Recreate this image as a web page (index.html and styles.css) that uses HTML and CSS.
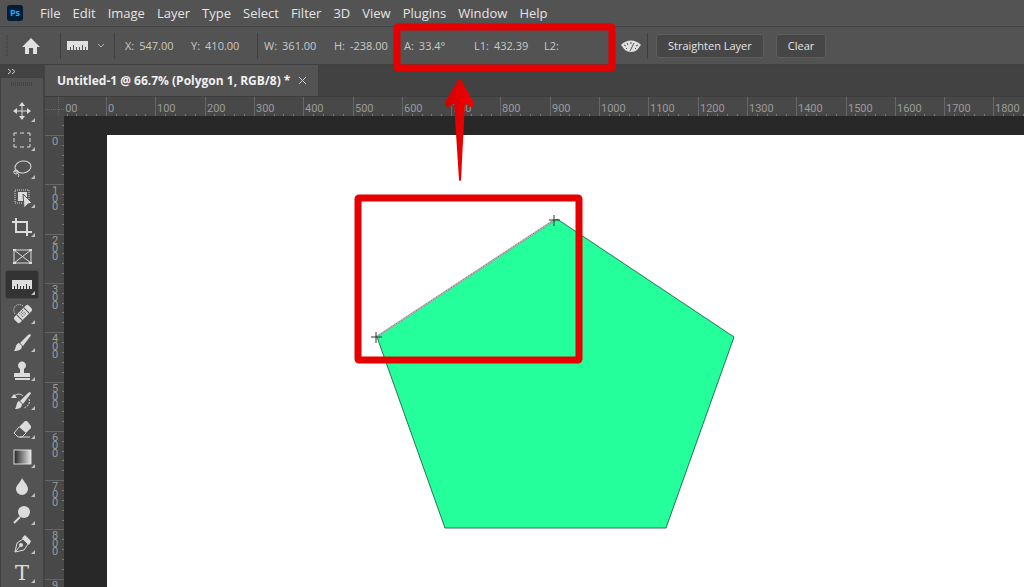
FILE: index.html
```html
<!DOCTYPE html>
<html lang="en">
<head>
    <meta charset="UTF-8">
    <meta name="viewport" content="width=device-width, initial-scale=1.0">
    <title>Untitled-1 @ 66.7%</title>
    <link rel="stylesheet" href="styles.css">
</head>
<body>
    <div class="app">
        <header class="menu-bar">
            <div class="logo">Ps</div>
            <nav class="menus">
                <button>File</button>
                <button>Edit</button>
                <button>Image</button>
                <button>Layer</button>
                <button>Type</button>
                <button>Select</button>
                <button>Filter</button>
                <button>3D</button>
                <button>View</button>
                <button>Plugins</button>
                <button>Window</button>
                <button>Help</button>
            </nav>
        </header>

        <div class="options-bar">
            <div class="grip"></div>
            <button class="home" aria-label="Home">
                <svg width="20" height="18" viewBox="0 0 20 18"><path d="M10 1L1 10h3v7h4v-6h4v6h4v-7h3z" fill="#e0e0e0"/></svg>
            </button>
            <div class="divider"></div>
            <button class="preset" aria-label="Ruler tool presets">
                <svg width="21" height="10" viewBox="0 0 21 10"><path d="M0 0h21v9h-2V6h-1v3h-2V4h-1v5h-2V6h-1v3h-2V6H9v3H7V4H6v5H4V6H3v3H0z" fill="#e0e0e0"/></svg>
                <svg width="8" height="5" viewBox="0 0 8 5"><path d="M1 1l3 3 3-3" fill="none" stroke="#b0b0b0"/></svg>
            </button>
            <div class="divider"></div>
            <div class="readouts readouts-position">
                <div class="readout"><span>X:</span><span>547.00</span></div>
                <div class="readout"><span>Y:</span><span>410.00</span></div>
            </div>
            <div class="divider"></div>
            <div class="readouts">
                <div class="readout"><span>W:</span><span>361.00</span></div>
                <div class="readout"><span>H:</span><span>-238.00</span></div>
                <div class="readout"><span>A:</span><span>33.4°</span></div>
                <div class="readout"><span>L1:</span><span>432.39</span></div>
                <div class="readout"><span>L2:</span></div>
            </div>
            <button class="scale" aria-label="Use measurement scale">
                <svg width="20" height="12" viewBox="0 0 20 12">
                    <path d="M0 5C5-1 15-1 20 5l-4 5q-2 2-6 2t-6-2z" fill="#e0e0e0"/>
                    <path d="M3 5l2 1M6 3l1 2M10 2v2M17 5l-2 1M5 8l1 1M15 8l-1 1M13 3L9 11" fill="none" stroke="#535353"/>
                </svg>
            </button>
            <div class="divider"></div>
            <button class="btn">Straighten Layer</button>
            <button class="btn">Clear</button>
        </div>

        <div class="workspace">
            <aside class="tools">
                <button class="tools-head" aria-label="Expand panel">
                    <svg width="9" height="7" viewBox="0 0 9 7"><path d="M1 1l3 2.500-3 2.500M5 1l3 2.500-3 2.500" fill="none" stroke="#d0d0d0"/></svg>
                </button>
                <div class="tools-grip"></div>
                <div class="tool-list">
                    <button class="tool" aria-label="Move">
                        <svg viewBox="0 0 24 24"><path d="M12 5v14M5 12h14"/><path class="fill" d="M12 3l3 4H9zM12 21l3-4H9zM3 12l4-3v6zM21 12l-4-3v6z"/></svg>
                    </button>
                    <button class="tool" aria-label="Marquee">
                        <svg viewBox="0 0 24 24"><path d="M4 8V5h3M10 5h4M17 5h3v3M20 10v4M20 16v3h-3M14 19h-4M7 19H4v-3M4 14v-4"/></svg>
                    </button>
                    <button class="tool" aria-label="Lasso">
                        <svg viewBox="0 0 24 24"><ellipse cx="13" cy="10" rx="8" ry="6" transform="rotate(-8 13 10)"/><path d="M6 13c-3 0-3 4 0 4 3 0 3-4 0-4M4 14c4 2 6 4 4 6"/></svg>
                    </button>
                    <button class="tool" aria-label="Object Selection">
                        <svg viewBox="0 0 24 24"><path stroke-dasharray="1 1" d="M5 4h14v13H5z"/><path class="fill" d="M8 6h9v9H8z"/><path class="fill cursor" d="M13 8l9 9-4 1-4 4z"/></svg>
                    </button>
                    <button class="tool" aria-label="Crop">
                        <svg viewBox="0 0 24 24"><path class="thick" d="M6 3v14h16M2 7h15v14"/></svg>
                    </button>
                    <button class="tool no-flyout" aria-label="Frame">
                        <svg viewBox="0 0 24 24"><path d="M4 6h17v13H4zM4 6l17 13M21 6L4 19"/><path class="fill" d="M3 5h3v2H3zM19 5h3v2h-3zM3 18h3v2H3zM19 18h3v2h-3z"/></svg>
                    </button>
                    <button class="tool active" aria-label="Ruler">
                        <svg viewBox="0 0 24 24"><path class="fill" d="M2 8h20v9h-2v-3h-1v3h-2v-5h-1v5h-2v-3h-1v3h-2v-3h-1v3H8v-5H7v5H5v-3H4v3H2z"/></svg>
                    </button>
                    <button class="tool" aria-label="Healing Brush">
                        <svg viewBox="0 0 24 24"><path stroke-dasharray="1 1" d="M13 5C8 1 1 6 5 13"/><g transform="rotate(-45 13 13)"><rect class="fill" x="3" y="9" width="20" height="8" rx="2"/><path stroke="#535353" d="M8 9v8M18 9v8"/><path stroke="#535353" stroke-dasharray="1 1" d="M11 10v6M13 10v6M15 10v6"/></g></svg>
                    </button>
                    <button class="tool" aria-label="Brush">
                        <svg viewBox="0 0 24 24"><path class="fill" d="M20 4c2 1 0 3-1 4l-6 8-3-3 8-8zM9 13l3 3c0 4-4 5-8 5 2-2 1-7 5-8z"/></svg>
                    </button>
                    <button class="tool" aria-label="Clone Stamp">
                        <svg viewBox="0 0 24 24"><path class="fill" d="M10 10a4 4 0 1 1 4 0v4h5q1 0 1 1v3H4v-3q0-1 1-1h5zM5 19h15v2H5z"/></svg>
                    </button>
                    <button class="tool" aria-label="History Brush">
                        <svg viewBox="0 0 24 24"><path class="fill" d="M20 4c2 1 0 3-1 4l-6 8-3-3 8-8zM9 13l3 3c0 4-3 5-7 5 2-2 1-7 4-8zM1 10l3-4 3 4z"/><path d="M4 8c4-3 7-2 9 0"/><path stroke-dasharray="2 1" d="M19 11q2 6-5 9"/></svg>
                    </button>
                    <button class="tool" aria-label="Eraser">
                        <svg viewBox="0 0 24 24"><path d="M9 10l-5 6 4 4h4l4-4M10 20h10"/><path class="fill" d="M9 10l6-6h2l4 5v2l-5 5z"/></svg>
                    </button>
                    <button class="tool" aria-label="Gradient">
                        <svg viewBox="0 0 24 24">
                            <defs><linearGradient id="ramp"><stop stop-color="#222"/><stop offset="1" stop-color="#e8e8e8"/></linearGradient></defs>
                            <rect x="4" y="5" width="17" height="14" fill="url(#ramp)"/>
                        </svg>
                    </button>
                    <button class="tool" aria-label="Blur">
                        <svg viewBox="0 0 24 24"><path class="fill" d="M12 4c2 4 6 7 6 11a6 6 0 0 1-12 0c0-4 5-7 6-11z"/></svg>
                    </button>
                    <button class="tool" aria-label="Dodge">
                        <svg viewBox="0 0 24 24"><circle class="fill" cx="14" cy="9" r="6"/><path class="thick" d="M10 14l-6 6"/></svg>
                    </button>
                    <button class="tool" aria-label="Pen">
                        <svg viewBox="0 0 24 24"><path d="M5 20l2-9 6-4 5 5-4 6zM5 20l6-7"/><circle class="fill" cx="11" cy="13" r="2"/><path class="fill" d="M12 6l3-3 6 6-2 4z"/></svg>
                    </button>
                    <button class="tool type-tool" aria-label="Type">T</button>
                </div>
            </aside>

            <main class="document">
                <div class="tabs">
                    <div class="tab">
                        <span>Untitled-1 @ 66.7% (Polygon 1, RGB/8) *</span>
                        <button class="tab-close" aria-label="Close">
                            <svg width="7" height="7" viewBox="0 0 7 7"><path d="M0 0l7 7M7 0L0 7" stroke="#c8c8c8"/></svg>
                        </button>
                    </div>
                </div>
                <div class="ruler-corner"></div>
                <svg class="ruler" id="rulerX"></svg>
                <svg class="ruler ruler-y" id="rulerY"></svg>
                <div class="stage">
                    <svg class="artboard">
                        <path d="M450 84L627 202L559 393H338L270 202z" fill="#24ff9c" stroke="#2b7456"/>
                        <path d="M269 202L447 85" stroke="#c9c9c9" stroke-width="2"/>
                        <path d="M269 202L447 85" stroke="#666" stroke-dasharray="1 1"/>
                        <path d="M264 202h11M269 197v11M442 85h11M447 80v11" stroke="#333"/>
                    </svg>
                </div>
            </main>
        </div>

        <!-- Highlights drawn over the window -->
        <svg class="annotations">
            <defs>
                <linearGradient id="arrow"><stop stop-color="#d40000"/><stop offset="1" stop-color="#f60000"/></linearGradient>
            </defs>
            <rect x="397" y="27" width="215" height="41" rx="1"/>
            <rect x="358" y="198" width="221" height="162" rx="1"/>
            <path d="M459 79Q460 78 461 80L474 103Q474 107 471 107Q468 107 465 102L461 180Q460 182 459 180L454 102Q451 107 448 107Q444 106 445 102Z" fill="url(#arrow)"/>
        </svg>
    </div>
    <script src="rulers.js"></script>
</body>
</html>
```
FILE: styles.css
```css
* {
    margin: 0;
    padding: 0;
    box-sizing: border-box;
}

body {
    font-family: "Open Sans", "Noto Sans", sans-serif;
    background: #535353;
    color: #e4e4e4;
}

button {
    background: none;
    border: none;
    color: inherit;
    font: inherit;
    cursor: pointer;
}

.app {
    position: relative;
    display: flex;
    flex-direction: column;
    height: 100vh;
    overflow: hidden;
}

/* Menu bar */
.menu-bar {
    display: flex;
    align-items: center;
    flex: none;
    height: 27px;
    padding-left: 7px;
    border-bottom: 1px solid #404040;
}

.logo {
    width: 16px;
    height: 16px;
    background: #001e36;
    border-radius: 3px;
    color: #31a8ff;
    font-size: 9px;
    font-weight: bold;
    line-height: 15px;
    text-align: center;
}

.menus {
    display: flex;
    gap: 12px;
    margin-left: 17px;
    font-size: 13px;
    line-height: 24px;
}

/* Options bar */
.options-bar {
    display: flex;
    align-items: center;
    flex: none;
    height: 38px;
    padding-left: 6px;
    border-bottom: 1px solid #404040;
    color: #c8c8c8;
    font-size: 11px;
}

.grip {
    width: 2px;
    height: 22px;
    background: repeating-linear-gradient(#444 0 1px, transparent 1px 2px);
}

.divider {
    width: 1px;
    height: 26px;
    background: #3e3e3e;
}

.home {
    width: 52px;
    line-height: 0;
}

.home svg {
    margin-left: -6px;
}

.preset {
    display: flex;
    align-items: center;
    gap: 9px;
    width: 53px;
    padding-left: 6px;
}

.readouts {
    display: flex;
    padding-left: 6px;
}

.readouts-position {
    padding-left: 10px;
}

.readout {
    display: flex;
    gap: 5px;
    width: 70px;
}

.readouts-position .readout {
    width: 66px;
}

.scale {
    width: 33px;
    line-height: 0;
}

.btn {
    height: 24px;
    padding: 0 11px;
    margin-left: 8px;
    background: #464646;
    border: 1px solid #5e5e5e;
    border-radius: 3px;
    color: #e4e4e4;
}

.btn + .btn {
    margin-left: 12px;
}

/* Tool panel */
.workspace {
    display: flex;
    flex: 1;
    min-height: 0;
}

.tools {
    display: flex;
    flex-direction: column;
    flex: none;
    width: 45px;
    border-left: 1px solid #424242;
    border-right: 2px solid #424242;
}

.tools-head {
    flex: none;
    height: 13px;
    padding-left: 6px;
    background: #424242;
    line-height: 0;
    text-align: left;
}

.tools-grip {
    flex: none;
    width: 22px;
    height: 4px;
    margin: 4px 10px 11px;
    background: repeating-linear-gradient(90deg, #444 0 1px, transparent 1px 2px);
}

.tool-list {
    display: flex;
    flex-direction: column;
    flex: 1;
    min-height: 0;
}

.tool {
    position: relative;
    flex: 1;
    width: 34px;
    min-height: 0;
    margin: 0 4px;
    border: 1px solid transparent;
    line-height: 0;
}

.tool svg {
    width: 24px;
    height: 24px;
    margin: 0 auto;
    fill: none;
    stroke: #dcdcdc;
}

.tool svg .fill {
    fill: #dcdcdc;
    stroke-width: 0;
}

.tool svg .cursor {
    stroke: #535353;
    stroke-width: 1;
}

.tool svg .thick {
    stroke-width: 2;
}

.tool::after {
    content: "";
    position: absolute;
    right: 3px;
    bottom: 3px;
    border-left: 4px solid transparent;
    border-bottom: 4px solid #c0c0c0;
}

.no-flyout::after {
    display: none;
}

.active {
    background: #333;
    border-color: #464646;
    border-radius: 3px;
}

.type-tool {
    color: #dcdcdc;
    font-family: "DejaVu Serif", serif;
    font-size: 21px;
}

/* Document window */
.document {
    display: grid;
    grid-template: 32px 19px 1fr / 19px 1fr;
    flex: 1;
    min-width: 0;
}

.tabs {
    display: flex;
    grid-column: 1 / -1;
    background: #424242;
    border-bottom: 1px solid #3c3c3c;
}

.tab {
    display: flex;
    align-items: center;
    gap: 9px;
    padding: 0 12px;
    background: #535353;
    color: #f0f0f0;
    font-size: 12px;
    font-weight: bold;
}

.tab-close {
    line-height: 0;
}

.ruler-corner {
    background:
        repeating-linear-gradient(90deg, #666 0 1px, transparent 1px 2px) 0 12px / 100% 1px no-repeat,
        repeating-linear-gradient(#666 0 1px, transparent 1px 2px) 13px 0 / 1px 100% no-repeat,
        #4a4a4a;
}

.ruler {
    width: 100%;
    height: 100%;
    min-height: 0;
    background: #484848;
    fill: #9a9a9a;
    font-family: "Liberation Sans Narrow", Roboto, sans-serif;
    font-size: 11px;
}

.ruler-y {
    font-family: Roboto, sans-serif;
    text-anchor: middle;
}

.stage {
    display: flex;
    min-height: 0;
    padding: 19px 0 0 43px;
    background: #282828;
}

.artboard {
    flex: 1;
    width: 100%;
    height: 100%;
    background: #fff;
    fill: none;
}

.annotations {
    position: absolute;
    inset: 0;
    width: 100%;
    height: 100%;
    fill: none;
    pointer-events: none;
}

.annotations rect {
    stroke: #e60000;
    stroke-width: 7px;
}
```
FILE: rulers.js
```js
const NS = 'http://www.w3.org/2000/svg';
const STEP = 49.3; // screen pixels per 100 document pixels

function add(parent, name, attrs, text) {
    const el = document.createElementNS(NS, name);
    for (const key in attrs) {
        el.setAttribute(key, attrs[key]);
    }
    if (text !== undefined) {
        el.textContent = text;
    }
    parent.appendChild(el);
    return el;
}

function drawRuler(svg, origin, vertical) {
    const length = vertical ? svg.clientHeight : svg.clientWidth;
    const line = (pos, size, color) => {
        const attrs = vertical
            ? { x: 19 - size, y: pos, width: size, height: 1 }
            : { x: pos, y: 19 - size, width: 1, height: size };
        add(svg, 'rect', { ...attrs, fill: color });
    };

    for (let n = -1; origin + n * STEP < length; n++) {
        const pos = Math.round(origin + n * STEP);
        line(pos, 19, '#666');
        for (let i = 1; i < 5; i++) {
            line(Math.round(origin + (n + i / 5) * STEP), 2, '#777');
        }

        const label = String(Math.abs(n * 100));
        if (!vertical) {
            add(svg, 'text', { x: pos + 2, y: 15 }, label);
        } else if (n >= 0) {
            // digits are stacked one under another
            const text = add(svg, 'text', { y: pos + 10 });
            [...label].forEach((digit, i) => {
                add(text, 'tspan', { x: 10, dy: i ? 8 : 0 }, digit);
            });
        }
    }
}

drawRuler(document.getElementById('rulerX'), 42, false);
drawRuler(document.getElementById('rulerY'), 19, true);
```
